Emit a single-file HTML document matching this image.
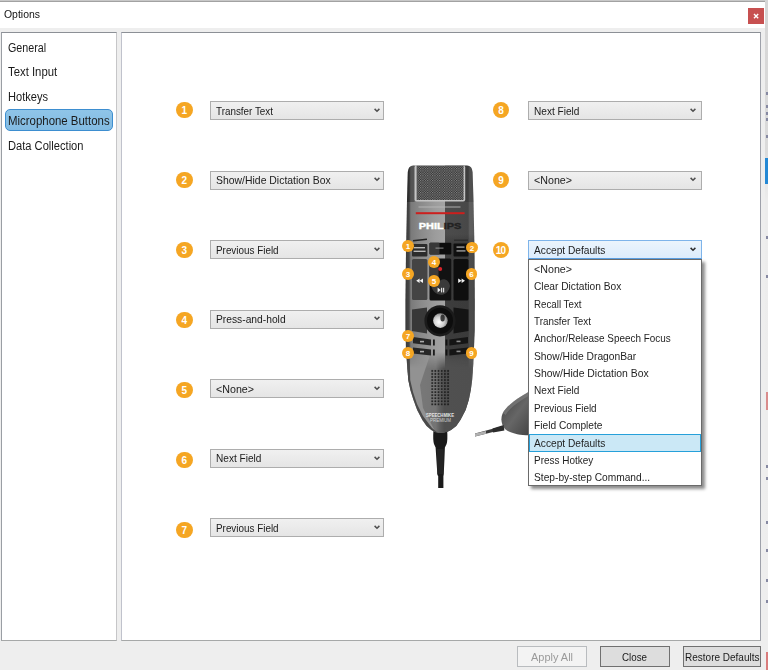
<!DOCTYPE html>
<html><head><meta charset="utf-8"><title>Options</title>
<style>
html,body{margin:0;padding:0;}
body{width:768px;height:670px;overflow:hidden;position:relative;background:#eeeeee;font-family:"Liberation Sans",sans-serif;}
.a{position:absolute;}
.t{position:absolute;white-space:nowrap;transform-origin:0 50%;display:block;line-height:16px;}
.panel{position:absolute;background:#fff;box-sizing:border-box;border:1px solid #b4b4b8;border-top-color:#8c8e92;}
.cb{position:absolute;box-sizing:border-box;border:1px solid #adadad;background:linear-gradient(#f0f0f0,#e5e5e5);width:174px;height:19px;}
.badge{position:absolute;border-radius:50%;background:#f5a623;color:#fff;font-weight:bold;text-align:center;}
.btn{position:absolute;box-sizing:border-box;border:1px solid #707070;background:#dddddd;height:21px;top:646px;}
</style></head><body>

<div class="a" style="left:0;top:0;width:765px;height:1px;background:#c8c8c8"></div><div class="a" style="left:0;top:1px;width:765px;height:1px;background:#a2a2a2"></div>
<div class="a" style="left:0;top:2px;width:765px;height:26px;background:#fff"></div>
<span class="t" style="left:3.80px;top:6.00px;font-size:11.5px;color:#111;transform:scaleX(0.9083);">Options</span>
<div class="a" style="left:748px;top:8px;width:16px;height:16px;background:#c75050"></div>
<svg class="a" style="left:748px;top:8px" width="16" height="16" viewBox="0 0 16 16"><path d="M6 6 L10.2 10.2 M10.2 6 L6 10.2" stroke="#fff" stroke-width="1.4" fill="none"/></svg>
<div class="a" style="left:765px;top:0;width:3px;height:670px;background:linear-gradient(#d6d6d6 0,#dadada 150px,#ececec 200px,#eeeeee 670px)"></div>
<div class="a" style="left:765px;top:158px;width:3px;height:26px;background:#2488d4"></div>
<div class="a" style="left:766px;top:392px;width:2px;height:18px;background:#d98c8c"></div>
<div class="a" style="left:766px;top:652px;width:2px;height:18px;background:#d97c7c"></div>
<div class="a" style="left:766px;top:92px;width:2px;height:3px;background:#8689a2"></div>
<div class="a" style="left:766px;top:105px;width:2px;height:3px;background:#8689a2"></div>
<div class="a" style="left:766px;top:112px;width:2px;height:3px;background:#8689a2"></div>
<div class="a" style="left:766px;top:118px;width:2px;height:3px;background:#8689a2"></div>
<div class="a" style="left:766px;top:135px;width:2px;height:3px;background:#8689a2"></div>
<div class="a" style="left:766px;top:236px;width:2px;height:3px;background:#8689a2"></div>
<div class="a" style="left:766px;top:275px;width:2px;height:3px;background:#8689a2"></div>
<div class="a" style="left:766px;top:465px;width:2px;height:3px;background:#8689a2"></div>
<div class="a" style="left:766px;top:477px;width:2px;height:3px;background:#8689a2"></div>
<div class="a" style="left:766px;top:521px;width:2px;height:3px;background:#8689a2"></div>
<div class="a" style="left:766px;top:549px;width:2px;height:3px;background:#8689a2"></div>
<div class="a" style="left:766px;top:579px;width:2px;height:3px;background:#8689a2"></div>
<div class="a" style="left:766px;top:600px;width:2px;height:3px;background:#8689a2"></div>
<div class="panel" style="left:1px;top:32px;width:116px;height:609px;border-color:#8c9096 #c6c6c8 #a6a8a8 #9a9ea4"></div>
<div class="panel" style="left:121px;top:32px;width:640px;height:609px;border-color:#8c9096 #9ea1aa #a6a8a8 #c0c2cc"></div>
<div class="a" style="left:5px;top:109.4px;width:108px;height:22px;box-sizing:border-box;border:1px solid #3d8ed0;border-radius:5px;background:linear-gradient(#8fc5e8,#82bbe2)"></div>
<span class="t" style="left:8.00px;top:40.00px;font-size:12px;color:#1a1a1a;transform:scaleX(0.8948);">General</span>
<span class="t" style="left:8.00px;top:64.00px;font-size:12px;color:#1a1a1a;transform:scaleX(0.9456);">Text Input</span>
<span class="t" style="left:8.00px;top:89.00px;font-size:12px;color:#1a1a1a;transform:scaleX(0.9228);">Hotkeys</span>
<span class="t" style="left:8.00px;top:113.00px;font-size:12px;color:#1a1a1a;transform:scaleX(0.9519);">Microphone Buttons</span>
<span class="t" style="left:8.00px;top:138.00px;font-size:12px;color:#1a1a1a;transform:scaleX(0.9278);">Data Collection</span>
<div class="cb" style="left:210px;top:101.10px"></div>
<span class="t" style="left:216.30px;top:103.00px;font-size:11.5px;color:#1b1b1b;transform:scaleX(0.8575);">Transfer Text</span>
<svg class="a" style="left:373.5px;top:107.7px" width="6" height="5" viewBox="0 0 6 5"><path d="M0.6 0.9 L3 3.3 L5.4 0.9" stroke="#505050" stroke-width="1.5" fill="none"/></svg>
<div class="badge" style="left:176.20px;top:102.10px;width:16.4px;height:16.4px;line-height:17.0px;font-size:10px;">1</div>
<div class="cb" style="left:210px;top:170.65px"></div>
<span class="t" style="left:216.30px;top:172.00px;font-size:11.5px;color:#1b1b1b;transform:scaleX(0.9067);">Show/Hide Dictation Box</span>
<svg class="a" style="left:373.5px;top:177.2px" width="6" height="5" viewBox="0 0 6 5"><path d="M0.6 0.9 L3 3.3 L5.4 0.9" stroke="#505050" stroke-width="1.5" fill="none"/></svg>
<div class="badge" style="left:176.20px;top:172.00px;width:16.4px;height:16.4px;line-height:17.0px;font-size:10px;">2</div>
<div class="cb" style="left:210px;top:240.20px"></div>
<span class="t" style="left:216.30px;top:242.00px;font-size:11.5px;color:#1b1b1b;transform:scaleX(0.8591);">Previous Field</span>
<svg class="a" style="left:373.5px;top:246.8px" width="6" height="5" viewBox="0 0 6 5"><path d="M0.6 0.9 L3 3.3 L5.4 0.9" stroke="#505050" stroke-width="1.5" fill="none"/></svg>
<div class="badge" style="left:176.20px;top:241.90px;width:16.4px;height:16.4px;line-height:17.0px;font-size:10px;">3</div>
<div class="cb" style="left:210px;top:309.75px"></div>
<span class="t" style="left:216.30px;top:311.00px;font-size:11.5px;color:#1b1b1b;transform:scaleX(0.8924);">Press-and-hold</span>
<svg class="a" style="left:373.5px;top:316.4px" width="6" height="5" viewBox="0 0 6 5"><path d="M0.6 0.9 L3 3.3 L5.4 0.9" stroke="#505050" stroke-width="1.5" fill="none"/></svg>
<div class="badge" style="left:176.20px;top:311.80px;width:16.4px;height:16.4px;line-height:17.0px;font-size:10px;">4</div>
<div class="cb" style="left:210px;top:379.30px"></div>
<span class="t" style="left:216.30px;top:381.00px;font-size:11.5px;color:#1b1b1b;transform:scaleX(0.9285);">&lt;None&gt;</span>
<svg class="a" style="left:373.5px;top:385.9px" width="6" height="5" viewBox="0 0 6 5"><path d="M0.6 0.9 L3 3.3 L5.4 0.9" stroke="#505050" stroke-width="1.5" fill="none"/></svg>
<div class="badge" style="left:176.20px;top:381.70px;width:16.4px;height:16.4px;line-height:17.0px;font-size:10px;">5</div>
<div class="cb" style="left:210px;top:448.85px"></div>
<span class="t" style="left:216.30px;top:450.00px;font-size:11.5px;color:#1b1b1b;transform:scaleX(0.8770);">Next Field</span>
<svg class="a" style="left:373.5px;top:455.5px" width="6" height="5" viewBox="0 0 6 5"><path d="M0.6 0.9 L3 3.3 L5.4 0.9" stroke="#505050" stroke-width="1.5" fill="none"/></svg>
<div class="badge" style="left:176.20px;top:451.60px;width:16.4px;height:16.4px;line-height:17.0px;font-size:10px;">6</div>
<div class="cb" style="left:210px;top:518.40px"></div>
<span class="t" style="left:216.30px;top:520.00px;font-size:11.5px;color:#1b1b1b;transform:scaleX(0.8591);">Previous Field</span>
<svg class="a" style="left:373.5px;top:525.0px" width="6" height="5" viewBox="0 0 6 5"><path d="M0.6 0.9 L3 3.3 L5.4 0.9" stroke="#505050" stroke-width="1.5" fill="none"/></svg>
<div class="badge" style="left:176.20px;top:521.50px;width:16.4px;height:16.4px;line-height:17.0px;font-size:10px;">7</div>
<div class="cb" style="left:528px;top:101.10px"></div>
<span class="t" style="left:534.00px;top:103.00px;font-size:11.5px;color:#1b1b1b;transform:scaleX(0.8770);">Next Field</span>
<svg class="a" style="left:690.4px;top:107.7px" width="6" height="5" viewBox="0 0 6 5"><path d="M0.6 0.9 L3 3.3 L5.4 0.9" stroke="#505050" stroke-width="1.5" fill="none"/></svg>
<div class="badge" style="left:492.80px;top:102.10px;width:16.4px;height:16.4px;line-height:17.0px;font-size:10px;">8</div>
<div class="cb" style="left:528px;top:170.65px"></div>
<span class="t" style="left:534.00px;top:172.00px;font-size:11.5px;color:#1b1b1b;transform:scaleX(0.9285);">&lt;None&gt;</span>
<svg class="a" style="left:690.4px;top:177.2px" width="6" height="5" viewBox="0 0 6 5"><path d="M0.6 0.9 L3 3.3 L5.4 0.9" stroke="#505050" stroke-width="1.5" fill="none"/></svg>
<div class="badge" style="left:492.80px;top:172.00px;width:16.4px;height:16.4px;line-height:17.0px;font-size:10px;">9</div>
<div class="cb" style="left:528px;top:240px;border-color:#7eb4ea;border-bottom-color:#5a9fe2;background:linear-gradient(#ebf4fc,#dcecfc)"></div>
<span class="t" style="left:534.00px;top:242.00px;font-size:11.5px;color:#1b1b1b;transform:scaleX(0.8853);">Accept Defaults</span>
<svg class="a" style="left:690.4px;top:246.9px" width="6" height="5" viewBox="0 0 6 5"><path d="M0.6 0.9 L3 3.3 L5.4 0.9" stroke="#2e2e2e" stroke-width="1.5" fill="none"/></svg>
<div class="badge" style="left:492.80px;top:241.80px;width:16.4px;height:16.4px;line-height:17.0px;font-size:10px;letter-spacing:-0.8px;text-indent:-0.8px;">10</div>
<svg class="a" style="left:396px;top:156px" width="140" height="340" viewBox="396 156 140 340">
<defs>
<linearGradient id="gb" x1="0" y1="0" x2="1" y2="0">
<stop offset="0.014" stop-color="#383838"/><stop offset="0.07" stop-color="#464646"/><stop offset="0.095" stop-color="#7a7a7a"/>
<stop offset="0.22" stop-color="#898989"/><stop offset="0.43" stop-color="#9c9c9c"/><stop offset="0.566" stop-color="#a3a3a3"/>
<stop offset="0.574" stop-color="#4c4c4c"/><stop offset="0.89" stop-color="#484848"/><stop offset="0.912" stop-color="#5e5e5e"/><stop offset="0.962" stop-color="#5c5c5c"/><stop offset="0.99" stop-color="#444"/>
</linearGradient>
<linearGradient id="gv" x1="0" y1="0" x2="0" y2="1">
<stop offset="0" stop-color="#000" stop-opacity="0"/><stop offset="0.08" stop-color="#000" stop-opacity="0.2"/>
<stop offset="0.9" stop-color="#000" stop-opacity="0.2"/><stop offset="1" stop-color="#000" stop-opacity="0"/>
</linearGradient>
<pattern id="gr" x="0" y="0" width="2.4" height="2.4" patternUnits="userSpaceOnUse">
<rect width="2.4" height="2.4" fill="#2a2a2a"/><rect width="1.2" height="1.2" fill="#8c8c8c"/><rect x="1.2" y="1.2" width="1.2" height="1.2" fill="#7a7a7a"/>
</pattern>
<pattern id="sp" x="431.2" y="369.6" width="3.2" height="3.04" patternUnits="userSpaceOnUse">
<rect x="0.1" y="0.4" width="1.7" height="1.7" fill="#171717"/>
</pattern>
<radialGradient id="ball" cx="0.4" cy="0.6" r="0.7">
<stop offset="0" stop-color="#ffffff"/><stop offset="0.5" stop-color="#cfcfcf"/><stop offset="1" stop-color="#6a6a6a"/>
</radialGradient>
<linearGradient id="m2" x1="0" y1="0" x2="1" y2="1">
<stop offset="0" stop-color="#3a3a3a"/><stop offset="0.5" stop-color="#666"/><stop offset="1" stop-color="#3c3c3c"/>
</linearGradient>
<clipPath id="bc"><path d="M413.4 165.4 L467 165.4 Q472.2 165.8 472.6 172 L473.5 200 L474.5 250 L474.8 300 L474.75 330 L473.8 352 L473.25 364 L472.1 380 L470.8 390 L468.75 400 L465.6 410 L460.4 420 L456.25 426 L451 430 Q447 432.6 443 432.6 L438 432.6 Q435 432.6 431.25 430 L426.6 426 L422.4 420 L417.2 410 L413.5 400 L410.4 390 L408.3 380 L407 364 L406 350 L405.4 330 L405.4 300 L406 250 L407 200 L407.8 172 Q408.2 165.8 413.4 165.4 Z"/></clipPath>
<linearGradient id="lo" x1="0" y1="0" x2="1" y2="0">
<stop offset="0.02" stop-color="#444"/><stop offset="0.07" stop-color="#4c4c4c"/><stop offset="0.1" stop-color="#7a7a7a"/>
<stop offset="0.44" stop-color="#747474"/><stop offset="0.5" stop-color="#5e5e5e"/><stop offset="0.56" stop-color="#505050"/><stop offset="0.93" stop-color="#4f4f4f"/><stop offset="0.96" stop-color="#5a5a5a"/><stop offset="1" stop-color="#484848"/>
</linearGradient>
<linearGradient id="fd" x1="0" y1="0" x2="0" y2="1"><stop offset="0" stop-color="#fff" stop-opacity="0"/><stop offset="0.2" stop-color="#fff" stop-opacity="1"/><stop offset="1" stop-color="#fff" stop-opacity="1"/></linearGradient>
<mask id="mk" maskUnits="userSpaceOnUse" x="404" y="352" width="72" height="82"><rect x="404" y="352" width="72" height="82" fill="url(#fd)"/></mask>
</defs>
<!-- second mic (background, right) -->
<path d="M475 436.5 L503 429.5 L503 426 L475 433.5 Z" fill="#3a3a3a"/>
<path d="M475 436.5 L486 433.8 L486 431 L475 433.5 Z" fill="#b0b0b0"/>
<path d="M536 388.4 C522 394.5 508 404 502.8 413 C500.4 418 501 424 505 429 C511 434 522 436 536 435 Z" fill="url(#m2)"/><path d="M536 388.4 C522 394.5 508 404 502.8 413 L505.6 415 C511 406 524 397.5 536 392.4 Z" fill="#8a8a8a" opacity="0.5"/><path d="M492.5 428.6 L503.6 425 L504.4 430.6 L493 432.4 Z" fill="#2c2c2c"/>
<!-- cable -->
<path d="M433.4 431 L447.2 431 Q447.8 440 446.6 444 L444.9 447.6 L444.4 460 L443.7 475 L443.4 476 L443.4 488 L438.2 488 L438.2 476 L437.4 475 L436.4 460 L435.6 447.6 L434 444 Q432.8 440 433.4 431 Z" fill="#1a1a1a"/>
<rect x="437" y="449" width="6.6" height="25" fill="#2c2c2c" opacity="0.6"/>
<!-- body -->
<g clip-path="url(#bc)">
<rect x="404" y="164" width="72" height="270" fill="url(#gb)"/>
<rect x="445.2" y="234" width="31" height="128" fill="url(#gv)"/>
<!-- diagonal highlight lower part -->
<g mask="url(#mk)"><rect x="404" y="352" width="72" height="82" fill="url(#lo)"/><path d="M409.6 352 L431 352 L420 385 L423 408 L436 433 L404 433 L404 380 Z" fill="#929292"/><path d="M404 352 L409.8 352 L410.2 380 L413 392 L417 404 L423 416 L432 428 L438 433 L404 433 Z" fill="#4a4a4a"/></g>
<rect x="404" y="164" width="10.6" height="38" fill="#000" opacity="0.32"/><rect x="465.2" y="164" width="11" height="38" fill="#000" opacity="0.15"/>
<!-- grille -->
<rect x="414.6" y="165.4" width="50.6" height="36" rx="2" fill="#c4c4c4"/>
<rect x="416.6" y="165.4" width="47" height="34.6" fill="url(#gr)"/>
<!-- tiny text + red line -->
<rect x="418.5" y="206" width="42" height="2" fill="#b8b8b8" opacity="0.45"/>
<rect x="415.8" y="212.2" width="48.8" height="2" fill="#cc1f1d"/>
<!-- PHILIPS -->
<text x="418.8" y="229" font-family="Liberation Sans, sans-serif" font-weight="bold" font-size="9.4" stroke-width="0.4" paint-order="stroke" textLength="42.6" lengthAdjust="spacingAndGlyphs"><tspan fill="#fff" stroke="#fff">PHIL</tspan><tspan fill="#222" stroke="#222">IPS</tspan></text>
<!-- button area darker surround -->
<!-- row 1 -->
<rect x="412" y="244" width="15.4" height="12.4" rx="1" fill="#2c2c2c"/>
<rect x="429.5" y="242.8" width="21.8" height="11.8" rx="1" fill="#0c0c0c"/>
<rect x="429.5" y="242.8" width="10" height="11.8" rx="1" fill="#383838"/>
<rect x="453.5" y="243.6" width="15" height="13" rx="1" fill="#101010"/>
<rect x="414" y="247" width="11" height="1.4" fill="#ddd" opacity="0.8"/><rect x="413.6" y="250.6" width="12" height="1.4" fill="#ddd" opacity="0.8"/>
<rect x="435.5" y="247.6" width="8" height="1" fill="#aaa" opacity="0.8"/>
<rect x="456.5" y="246.4" width="8" height="1.4" fill="#bbb" opacity="0.8"/><rect x="456.5" y="250.2" width="9" height="1.4" fill="#bbb" opacity="0.8"/>
<rect x="413" y="239.2" width="14" height="1.6" fill="#222" transform="rotate(-6 420 240)"/>
<rect x="454" y="239.6" width="14" height="1.2" fill="#2a2a2a"/>
<!-- row 2 -->
<rect x="412" y="259" width="15.4" height="41" rx="1.5" fill="#444"/>
<rect x="429.5" y="258.4" width="21.8" height="42" rx="1.5" fill="#121212"/>
<rect x="429.5" y="258.4" width="9" height="24" rx="1.5" fill="#3a3a3a"/>
<rect x="453.5" y="259" width="15" height="41.5" rx="1.5" fill="#0e0e0e"/>
<circle cx="440.2" cy="269" r="2" fill="#d8232a"/>
<path d="M431 283 C431 296 447 300 450 286 C449 278 440 277 438 284 Z" fill="#3a3a3a"/>
<path d="M419.6 278.4 L419.6 283 L416.2 280.7 Z M423 278.4 L423 283 L419.6 280.7 Z" fill="#f0f0f0"/>
<path d="M458.2 278.4 L458.2 283 L461.6 280.7 Z M461.6 278.4 L461.6 283 L465 280.7 Z" fill="#f0f0f0"/>
<path d="M437.6 287.6 L437.6 292.4 L440.6 290 Z" fill="#eee"/><rect x="441" y="287.8" width="1.2" height="4.6" fill="#ddd"/><rect x="443" y="287.8" width="1.2" height="4.6" fill="#ddd"/>
<!-- trackball row -->
<path d="M412 309.5 L427 307.5 L427 333.5 L412 331 Z" fill="#383838"/>
<path d="M453.5 307.5 L468.5 309.5 L468.5 331 L453.5 333.5 Z" fill="#141414"/>
<circle cx="440" cy="320.8" r="15.6" fill="#1b1b1b"/>
<circle cx="440" cy="320.8" r="13" fill="#0d0d0d"/>
<circle cx="440.4" cy="320.6" r="7.3" fill="url(#ball)"/>
<ellipse cx="442.6" cy="318" rx="2.2" ry="3.6" fill="#222" opacity="0.85"/>
<!-- F buttons -->
<path d="M413 337 L431 339.4 L431 345.6 L413 343.2 Z" fill="#262626"/>
<path d="M413 347.4 L431 349.4 L431 355.6 L413 353.6 Z" fill="#262626"/>
<path d="M449.4 339.4 L468 337 L468 343.2 L449.4 345.6 Z" fill="#151515"/>
<path d="M449.4 349.4 L468 347.4 L468 353.6 L449.4 355.6 Z" fill="#151515"/>
<rect x="433" y="339.5" width="1.8" height="6" fill="#1c1c1c"/><rect x="433" y="349.5" width="1.8" height="6" fill="#1c1c1c"/>
<rect x="445.6" y="339.5" width="1.8" height="6" fill="#111"/><rect x="445.6" y="349.5" width="1.8" height="6" fill="#111"/>
<rect x="420" y="340.8" width="4" height="1.6" fill="#ccc" opacity="0.8"/><rect x="420" y="350.8" width="4" height="1.6" fill="#ccc" opacity="0.8"/>
<rect x="456.5" y="340.6" width="4" height="1.6" fill="#aaa" opacity="0.8"/><rect x="456.5" y="350.6" width="4" height="1.6" fill="#aaa" opacity="0.8"/>
<!-- speaker -->
<rect x="431.2" y="369.6" width="18" height="36.4" fill="url(#sp)"/>
<!-- speechmike text -->
<text x="426" y="417" font-family="Liberation Sans, sans-serif" font-weight="bold" font-size="5.2" fill="#e4e4e4" textLength="28" lengthAdjust="spacingAndGlyphs">SPEECHMIKE</text>
<text x="430" y="422" font-family="Liberation Sans, sans-serif" font-size="4.6" fill="#d0d0d0" textLength="21" lengthAdjust="spacingAndGlyphs">PREMIUM</text>
</g>
</svg>

<div class="badge" style="left:402.20px;top:240.00px;width:11.8px;height:11.8px;line-height:13.4px;font-size:8px;">1</div>
<div class="badge" style="left:466.10px;top:241.50px;width:11.8px;height:11.8px;line-height:13.4px;font-size:8px;">2</div>
<div class="badge" style="left:402.20px;top:268.10px;width:11.8px;height:11.8px;line-height:13.4px;font-size:8px;">3</div>
<div class="badge" style="left:428.20px;top:256.40px;width:11.8px;height:11.8px;line-height:13.4px;font-size:8px;">4</div>
<div class="badge" style="left:428.20px;top:275.20px;width:11.8px;height:11.8px;line-height:13.4px;font-size:8px;">5</div>
<div class="badge" style="left:465.70px;top:268.10px;width:11.8px;height:11.8px;line-height:13.4px;font-size:8px;">6</div>
<div class="badge" style="left:402.20px;top:330.40px;width:11.8px;height:11.8px;line-height:13.4px;font-size:8px;">7</div>
<div class="badge" style="left:402.20px;top:347.20px;width:11.8px;height:11.8px;line-height:13.4px;font-size:8px;">8</div>
<div class="badge" style="left:465.70px;top:347.00px;width:11.8px;height:11.8px;line-height:13.4px;font-size:8px;">9</div>
<div class="a" style="left:528px;top:259px;width:174px;height:227px;box-sizing:border-box;border:1px solid #6a6a6a;background:#fff;box-shadow:3px 3px 3px rgba(0,0,0,0.45)"></div>
<div class="a" style="left:529px;top:434px;width:172px;height:18px;box-sizing:border-box;border:1px solid #26a0da;background:#cbe8f6"></div>
<span class="t" style="left:533.50px;top:261.00px;font-size:11.5px;color:#1f1f1f;transform:scaleX(0.9285);">&lt;None&gt;</span>
<span class="t" style="left:533.50px;top:278.00px;font-size:11.5px;color:#1f1f1f;transform:scaleX(0.8864);">Clear Dictation Box</span>
<span class="t" style="left:533.50px;top:296.00px;font-size:11.5px;color:#1f1f1f;transform:scaleX(0.8477);">Recall Text</span>
<span class="t" style="left:533.50px;top:313.00px;font-size:11.5px;color:#1f1f1f;transform:scaleX(0.8575);">Transfer Text</span>
<span class="t" style="left:533.50px;top:330.00px;font-size:11.5px;color:#1f1f1f;transform:scaleX(0.8626);">Anchor/Release Speech Focus</span>
<span class="t" style="left:533.50px;top:348.00px;font-size:11.5px;color:#1f1f1f;transform:scaleX(0.8936);">Show/Hide DragonBar</span>
<span class="t" style="left:533.50px;top:365.00px;font-size:11.5px;color:#1f1f1f;transform:scaleX(0.9067);">Show/Hide Dictation Box</span>
<span class="t" style="left:533.50px;top:382.00px;font-size:11.5px;color:#1f1f1f;transform:scaleX(0.8770);">Next Field</span>
<span class="t" style="left:533.50px;top:400.00px;font-size:11.5px;color:#1f1f1f;transform:scaleX(0.8591);">Previous Field</span>
<span class="t" style="left:533.50px;top:417.00px;font-size:11.5px;color:#1f1f1f;transform:scaleX(0.8857);">Field Complete</span>
<span class="t" style="left:533.50px;top:435.00px;font-size:11.5px;color:#1f1f1f;transform:scaleX(0.8853);">Accept Defaults</span>
<span class="t" style="left:533.50px;top:452.00px;font-size:11.5px;color:#1f1f1f;transform:scaleX(0.8672);">Press Hotkey</span>
<span class="t" style="left:533.50px;top:469.00px;font-size:11.5px;color:#1f1f1f;transform:scaleX(0.8868);">Step-by-step Command...</span>
<div class="btn" style="left:517px;width:70px;border-color:#b9bcbf;background:#f3f3f3"></div>
<span class="t" style="left:531.00px;top:649.00px;font-size:11.5px;color:#9a9a9a;transform:scaleX(0.9522);">Apply All</span>
<div class="btn" style="left:600px;width:70px;"></div>
<span class="t" style="left:622.00px;top:649.00px;font-size:11.5px;color:#1b1b1b;transform:scaleX(0.8503);">Close</span>
<div class="btn" style="left:683px;width:78px;"></div>
<span class="t" style="left:684.50px;top:649.00px;font-size:11.5px;color:#1b1b1b;transform:scaleX(0.8698);">Restore Defaults</span>
</body></html>
